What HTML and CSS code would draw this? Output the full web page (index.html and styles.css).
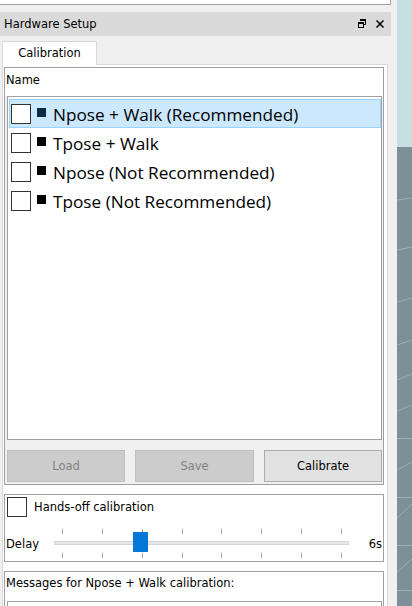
FILE: index.html
```html
<!DOCTYPE html>
<html>
<head>
<meta charset="utf-8">
<link rel="stylesheet" href="styles.css">
</head>
<body>
<div class="app">
  <div class="panel">
    <div class="topbox"></div>
    <div class="titlebar">
      <span class="title">Hardware Setup</span>
      <span class="tb-icons">
        <svg class="ic-float" width="8" height="9" viewBox="0 0 8 9">
          <path d="M2.5 0.5h5v5h-2" fill="none" stroke="#000" stroke-width="1"/>
          <rect x="2" y="0" width="6" height="2" fill="#000"/>
          <rect x="0.5" y="3.5" width="5" height="5" fill="#dadada" stroke="#000" stroke-width="1"/>
          <rect x="0" y="3" width="6" height="2" fill="#000"/>
        </svg>
        <svg class="ic-close" width="8" height="8" viewBox="0 0 8 8">
          <path d="M0.5 0.5L7.5 7.5M7.5 0.5L0.5 7.5" stroke="#000" stroke-width="1.5"/>
        </svg>
      </span>
    </div>
    <div class="tabbar"><div class="tab">Calibration</div></div>
    <div class="pane">
      <div class="frame f1">
        <div class="header">Name</div>
        <div class="list">
          <div class="row sel"><span class="cb"></span><span class="sw sw-navy"></span><span class="lbl">Npose + Walk (Recommended)</span></div>
          <div class="row"><span class="cb"></span><span class="sw"></span><span class="lbl">Tpose + Walk</span></div>
          <div class="row"><span class="cb"></span><span class="sw"></span><span class="lbl">Npose (Not Recommended)</span></div>
          <div class="row"><span class="cb"></span><span class="sw"></span><span class="lbl">Tpose (Not Recommended)</span></div>
        </div>
        <div class="buttons">
          <div class="btn disabled b1">Load</div>
          <div class="btn disabled b2">Save</div>
          <div class="btn b3">Calibrate</div>
        </div>
      </div>
      <div class="frame f2">
        <div class="hands"><span class="cb2"></span><span>Hands-off calibration</span></div>
        <div class="delay">
          <span class="dlabel">Delay</span>
          <div class="slider">
            <div class="ticks"><i></i><i></i><i></i><i></i><i></i><i></i><i></i><i></i></div>
            <div class="groove"></div>
            <div class="ticks bottom"><i></i><i></i><i></i><i></i><i></i><i></i><i></i><i></i></div>
            <div class="handle"></div>
          </div>
          <span class="dval">6s</span>
        </div>
      </div>
      <div class="frame f3">
        <div class="msgtitle">Messages for Npose + Walk calibration:</div>
        <div class="msgbox"></div>
      </div>
    </div>
  </div>
  <div class="viewport">
    <svg width="15" height="606" viewBox="0 0 15 606">
      <rect x="0" y="0" width="15" height="147" fill="#c6dfe0"/>
      <rect x="0" y="147" width="15" height="459" fill="#7d8f97"/>
      <g stroke="#a9b6bc" stroke-width="1" fill="none" opacity="0.8">
        <path d="M0 200L15 198"/>
        <path d="M0 250L15 247"/>
        <path d="M0 302L15 298"/>
        <path d="M0 345L15 340"/>
        <path d="M0 380L15 374"/>
        <path d="M0 411L15 405"/>
        <path d="M0 438.5H15"/>
        <path d="M0 470L15 462"/>
        <path d="M0 497.5H15"/>
        <path d="M0 518L15 504"/>
        <path d="M0 545.5H15"/>
        <path d="M0 572L15 559"/>
        <path d="M0 590.5H15"/>
      </g>
    </svg>
  </div>
</div>
</body>
</html>
```

FILE: styles.css
```css
* { box-sizing: border-box; }

body {
  margin: 0;
  background: #f0f0f0;
  font-family: "DejaVu Sans", "Noto Sans", sans-serif;
  font-size: 11.5px;
  color: #000;
}

.app {
  display: flex;
  height: 606px;
  overflow: hidden;
}

.panel {
  width: 397px;
  flex: none;
  background: #f0f0f0;
}

.topbox {
  width: 391px;
  height: 5px;
  background: #ffffff;
  border-right: 1px solid #a0a0a0;
  border-bottom: 1px solid #a0a0a0;
}

.titlebar {
  margin-top: 7px;
  width: 391px;
  height: 24px;
  background: #dadada;
  display: flex;
  align-items: center;
  padding: 0 7px 0 4px;
}

.title { flex: 1; }

.tb-icons {
  display: flex;
  align-items: center;
  gap: 10px;
}

.ic-float { display: block; margin-top: -1px; }
.ic-close { display: block; }

.tabbar {
  margin-top: 5px;
  padding-left: 2px;
  display: flex;
  height: 23px;
  position: relative;
  z-index: 1;
}

.tab {
  width: 95px;
  height: 24px;
  background: #ffffff;
  border: 1px solid #d9d9d9;
  border-bottom: none;
  display: flex;
  align-items: center;
  justify-content: center;
  padding-bottom: 2px;
}

.pane {
  margin-left: 2px;
  width: 386px;
  height: 560px;
  background: #ffffff;
  border: 1px solid #d9d9d9;
  padding: 2px 0 0 1px;
}

.frame {
  width: 380px;
  border: 1px solid #a0a0a0;
}

.f1 {
  height: 418px;
  background: #f0f0f0;
}

.header {
  height: 28px;
  background: #ffffff;
  padding-left: 1px;
  line-height: 25px;
}

.list {
  margin-left: 2px;
  width: 375px;
  height: 344px;
  background: #ffffff;
  border: 1px solid #a0a0a0;
  padding: 2px 0 0 1px;
}

.row {
  width: 372px;
  height: 29px;
  border: 1px solid transparent;
  display: flex;
  align-items: center;
  padding-left: 1px;
}

.row.sel {
  background: #cce8ff;
  border-color: #99d1ff;
}

.cb {
  width: 20px;
  height: 20px;
  flex: none;
  background: #ffffff;
  border: 1px solid #333333;
}

.sw {
  width: 9px;
  height: 9px;
  flex: none;
  margin-left: 6px;
  background: #000000;
  margin-top: -2px;
}

.sw-navy { background: #0b2c46; }

.lbl {
  margin-left: 7px;
  font-family: "Open Sans", "Noto Sans", sans-serif;
  font-size: 17.2px;
  line-height: 27px;
  padding-top: 1px;
  white-space: nowrap;
}

.buttons {
  display: flex;
  gap: 10px;
  padding: 10px 0 0 2px;
}

.btn {
  height: 32px;
  display: flex;
  align-items: center;
  justify-content: center;
  border: 1px solid #adadad;
  background: #e1e1e1;
}

.b1 { width: 118px; }
.b2 { width: 119px; }
.b3 { width: 118px; }

.btn.disabled {
  background: #cccccc;
  border-color: #bfbfbf;
  color: #838383;
}

.f2 {
  margin-top: 9px;
  height: 68px;
  background: #ffffff;
  padding: 2px 1px 0 1px;
}

.hands {
  display: flex;
  align-items: center;
  height: 20px;
  padding-left: 1px;
}

.cb2 {
  width: 20px;
  height: 20px;
  border: 1px solid #333333;
  background: #ffffff;
  margin-right: 7px;
}

.delay {
  margin-top: 11px;
  height: 30px;
  display: flex;
  align-items: center;
}

.dlabel {
  width: 48px;
  flex: none;
  padding-top: 2px;
}

.slider {
  width: 295px;
  height: 30px;
  flex: none;
  position: relative;
  padding-top: 1px;
}

.ticks {
  height: 5px;
  display: flex;
  justify-content: space-between;
  padding: 0 7px 0 8px;
}

.ticks i {
  display: block;
  width: 1px;
  height: 5px;
  background: #a8a8a8;
}

.groove {
  margin-top: 7px;
  height: 4px;
  background: #e7e7e7;
  border: 1px solid #d6d6d6;
}

.ticks.bottom { margin-top: 8px; }

.handle {
  position: absolute;
  left: 79px;
  top: 4px;
  width: 15px;
  height: 20px;
  background: #0078d7;
}

.dval {
  margin-left: auto;
  padding-top: 1px;
}

.f3 {
  margin-top: 9px;
  height: 60px;
  background: #ffffff;
}

.msgtitle {
  height: 29px;
  line-height: 23px;
  padding-left: 1px;
}

.msgbox {
  margin-left: 2px;
  width: 375px;
  height: 20px;
  border: 1px solid #a0a0a0;
  background: #ffffff;
}

.viewport {
  width: 15px;
  flex: none;
}

.viewport svg { display: block; }
```
